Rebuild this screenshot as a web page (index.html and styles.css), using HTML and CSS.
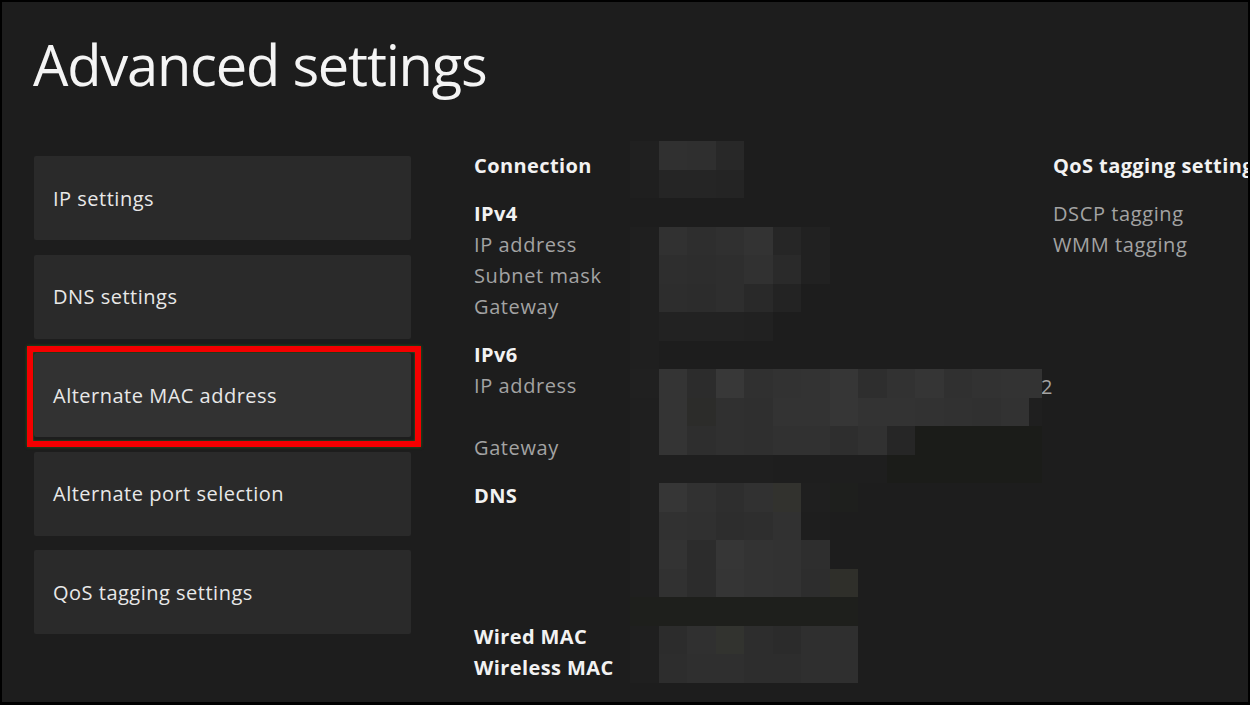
FILE: index.html
```html
<!DOCTYPE html>
<html lang="en">
<head>
  <meta charset="UTF-8" />
  <title>Advanced settings</title>
  <link rel="stylesheet" href="styles.css">
</head>
<body>
  <div class="screen">
    <h1 class="title">Advanced settings</h1>

    <div class="content">
      <nav class="menu">
        <div class="menu-item">IP settings</div>
        <div class="menu-item">DNS settings</div>
        <div class="menu-item focused">Alternate MAC address</div>
        <div class="menu-item">Alternate port selection</div>
        <div class="menu-item">QoS tagging settings</div>
      </nav>

      <section class="info">
        <div class="group">
          <div class="head">Connection</div>
        </div>
        <div class="group">
          <div class="head">IPv4</div>
          <div class="label">IP address</div>
          <div class="label">Subnet mask</div>
          <div class="label">Gateway</div>
        </div>
        <div class="group">
          <div class="head">IPv6</div>
          <div class="label">IP address</div>
          <div class="label">&nbsp;</div>
          <div class="label">Gateway</div>
        </div>
        <div class="group">
          <div class="head">DNS</div>
          <div class="label">&nbsp;</div>
          <div class="label">&nbsp;</div>
          <div class="label">&nbsp;</div>
        </div>
        <div class="group">
          <div class="head">Wired MAC</div>
          <div class="head">Wireless MAC</div>
        </div>
      </section>

      <section class="info qos">
        <div class="group">
          <div class="head">QoS tagging settings</div>
        </div>
        <div class="group">
          <div class="label">DSCP tagging</div>
          <div class="label">WMM tagging</div>
        </div>
      </section>
    </div>

    <!-- blurred-out values -->
    <span class="peek">2</span>
    <div class="mosaic" id="mosaic"></div>
  </div>

  <script>
    const rows = [
      ['#202020','#303030','#2f2f2f','#282828'],
      ['#1f1f1f','#252525','#252525','#242424'],
      [],
      ['#1f1f1f','#313131','#2e2e2e','#303030','#333333','#262626','#212121'],
      ['#1f1f1f','#2e2e2e','#2d2d2d','#2e2e2e','#313131','#2a2a2a','#212121'],
      ['#1f1f1f','#2d2d2d','#2c2c2c','#2e2e2e','#292929','#232323'],
      ['#1f1f1f','#222222','#222222','#222222','#212121'],
      ['#1f1f1f'],
      ['#202020','#343434','#2c2c2c','#383838','#303030','#323232','#333333','#363636','#2e2e2e','#323232','#353535','#303030','#323232','#333333','#333333'],
      ['#1f1f1f','#343434','#2c2c2a','#303030','#2f2f2f','#333333','#333333','#363636','#333333','#333333','#323232','#313131','#303030','#323232','#1f1f1f'],
      ['#1f1f1f','#343434','#2e2e2e','#303030','#2f2f2f','#313131','#313131','#2e2e2e','#313131','#262626','#1b1c19','#1b1c19','#1b1c19','#1b1c19','#1b1c19'],
      ['#1f1f1f','#1f1f1f','#1f1f1f','#1f1f1f','#1f1f1f','#1e1e1e','#1e1e1e','#1e1e1e','#1e1e1e','#1b1c19','#1b1c19','#1b1c19','#1b1c19','#1b1c19','#1b1c19'],
      ['#1f1f1f','#363636','#313131','#2e2e2e','#313131','#32322e','#1f1f1f','#1e1f1d'],
      ['#1f1f1f','#313131','#303030','#2d2d2d','#2e2e2e','#313131','#1e1e1e'],
      ['#1f1f1f','#333333','#2c2c2c','#363636','#333333','#323232','#2e2e2e'],
      ['#1f1f1f','#313131','#2c2c2c','#353535','#333333','#323232','#2d2d2d','#2f2f2a'],
      ['#1e1f1c','#1e1f1c','#1e1f1c','#1e1f1c','#1e1f1c','#1e1f1c','#1e1f1c','#1e1f1c'],
      ['#1f1f1f','#2c2c2c','#303030','#32332f','#2d2d2d','#2b2b2b','#2f2f2f','#2f2f2f'],
      ['#1f1f1f','#2d2d2d','#2f2f2f','#2f2f2f','#2d2d2d','#2d2d2d','#2f2f2f','#2f2f2f']
    ];

    const mosaic = document.getElementById('mosaic');
    rows.forEach(row => {
      for (let i = 0; i < 15; i++) {
        const cell = document.createElement('div');
        if (row[i]) cell.style.background = row[i];
        mosaic.appendChild(cell);
      }
    });
  </script>
</body>
</html>
```

FILE: styles.css
```css
body {
  margin: 0;
  background: #000;
  font-family: "Open Sans", "Noto Sans", sans-serif;
}
.screen {
  position: relative;
  width: 1250px; height: 705px;
  box-sizing: border-box;
  border: 2px solid #000; border-bottom-width: 3px;
  background: #1d1d1d;
  overflow: hidden;
}
.title {
  margin: 0;
  padding: 24px 0 0 31px;
  font-size: 56px; font-weight: 400;
  line-height: 76px;
  color: #f4f4f4;
  letter-spacing: -1.2px;
}
.content {
  display: flex;
  margin-top: 48px;
  padding-left: 32px;
}
.menu {
  flex-shrink: 0;
  display: flex; flex-direction: column; gap: 14.5px;
  width: 377px;
  margin-top: 6px;
}
.menu-item {
  position: relative;
  height: 84px;
  display: flex; align-items: center;
  padding-left: 19px;
  background: #2a2a2a;
  border-radius: 2px;
  color: #e8e8e8;
  font-size: 20px;
  letter-spacing: 0.5px;
}
.menu-item.focused { background: #323232; }
.menu-item.focused::after {
  content: "";
  position: absolute;
  left: -7px; top: -7px; right: -10px; bottom: -10px;
  border: 6px solid #f40000;
  box-shadow: 0 0 3px rgba(40, 110, 20, 0.8), inset 0 0 2px rgba(60, 140, 30, 0.9);
}
.info {
  flex-shrink: 0;
  margin-left: 63px;
  width: 579px;
  color: #f2f2f2;
  font-size: 20px;
  line-height: 31px;
}
.group + .group { margin-top: 17px; }
.head { font-weight: 700; letter-spacing: 0.4px; }
.label { color: #a3a3a3; letter-spacing: 0.6px; }
.qos { margin-left: 0; white-space: nowrap; }
.mosaic {
  position: absolute;
  left: 628px; top: 139px;
  display: grid;
  grid-template-columns: repeat(14, 28.5px) 13px;
  grid-auto-rows: 28.5px;
}
.peek {
  position: absolute;
  left: 1039px; top: 369px;
  color: #a3a3a3; font-size: 20px;
  line-height: 31px;
}
```
